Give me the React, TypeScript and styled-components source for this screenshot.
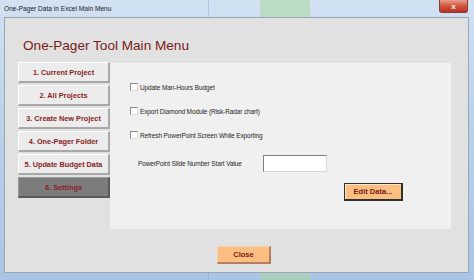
import React from "react";
import styled, { createGlobalStyle } from "styled-components";

const Global = createGlobalStyle`
  html, body { margin: 0; padding: 0; }
  body { width: 474px; height: 280px; overflow: hidden; font-family: "Liberation Sans", Arial, sans-serif; }
`;

const Window = styled.div`
  width: 474px;
  height: 280px;
  box-sizing: border-box;
  display: flex;
  flex-direction: column;
  background:
    linear-gradient(90deg, transparent 260px, rgba(170,215,160,0.55) 260px, rgba(170,215,160,0.55) 310px, transparent 310px),
    linear-gradient(90deg, transparent 208px, rgba(120,150,190,0.35) 208px, rgba(120,150,190,0.35) 209px, transparent 209px),
    linear-gradient(180deg, #d2e2f3 0%, #bcd2ec 40%, #a9c4e4 100%);
  padding: 0 5px 7px 4px;
`;

const TitleBar = styled.div`
  height: 17px;
  display: flex;
  align-items: flex-start;
  justify-content: space-between;
`;

const TitleText = styled.span`
  font-size: 6.6px;
  color: #1a1a1a;
  margin-top: 5px;
`;

const CloseX = styled.div`
  width: 27px;
  height: 12px;
  margin-right: 1px;
  border-radius: 0 0 3px 3px;
  background: linear-gradient(180deg, #e8a090 0%, #d45a42 45%, #b83220 100%);
  border: 1px solid #8a3a30;
  border-top: none;
  color: #fff;
  font-size: 8px;
  font-weight: bold;
  display: flex;
  align-items: center;
  justify-content: center;
`;

const Client = styled.div`
  flex: 1;
  background: #e1e1e1;
  border: 1px solid #9aa6b4;
  display: flex;
  flex-direction: column;
  padding: 19px 17px 0 13px;
`;

const Heading = styled.h1`
  margin: 0 0 7px 5px;
  font-weight: normal;
  font-size: 13.6px;
  line-height: 18px;
  color: #7a1a1c;
`;

const Body = styled.div`
  display: flex;
  align-items: flex-start;
`;

const NavColumn = styled.div`
  width: 92px;
  display: flex;
  flex-direction: column;
  gap: 2px;
`;

const NavButton = styled.div<{ $active?: boolean }>`
  height: 21px;
  box-sizing: border-box;
  display: flex;
  align-items: center;
  justify-content: center;
  font-size: 7.3px;
  font-weight: bold;
  color: #8a1c22;
  background: ${(p) => (p.$active ? "#7c7c7c" : "#ececec")};
  border-top: 1px solid ${(p) => (p.$active ? "#9a9a9a" : "#ffffff")};
  border-left: 1px solid ${(p) => (p.$active ? "#9a9a9a" : "#ffffff")};
  border-right: 2px solid ${(p) => (p.$active ? "#5a5a5a" : "#a8a8a8")};
  border-bottom: 2px solid ${(p) => (p.$active ? "#5a5a5a" : "#a8a8a8")};
`;

const Panel = styled.div`
  margin-top: 1px;
  width: 341px;
  height: 166px;
  background: #f0f0f0;
  box-sizing: border-box;
  display: flex;
  flex-direction: column;
  padding: 18px 0 0 20px;
`;

const CheckRow = styled.label`
  display: flex;
  align-items: center;
  gap: 2px;
  height: 12px;
  margin-bottom: 12px;
  font-size: 6.5px;
  letter-spacing: -0.12px;
  color: #262626;
`;

const Box = styled.span`
  width: 6px;
  height: 6px;
  background: #fff;
  border: 1px solid #8c8c8c;
  border-right-color: #dcdcdc;
  border-bottom-color: #dcdcdc;
`;

const FieldRow = styled.div`
  display: flex;
  align-items: center;
  margin-left: 8px;
  margin-top: 2px;
  font-size: 6.5px;
  letter-spacing: -0.12px;
  color: #262626;
`;

const FieldLabel = styled.span`
  width: 125px;
`;

const TextBox = styled.div`
  width: 64px;
  height: 17px;
  box-sizing: border-box;
  background: #fff;
  border: 1px solid #7f7f7f;
  border-right-color: #d8d8d8;
  border-bottom-color: #d8d8d8;
`;

const OrangeButton = styled.div<{ $focus?: boolean }>`
  box-sizing: border-box;
  display: flex;
  align-items: center;
  justify-content: center;
  font-size: 7.5px;
  font-weight: bold;
  color: #7a1a10;
  background: #fdbe82;
  border: 1px solid ${(p) => (p.$focus ? "#303030" : "#f0d0b0")};
  border-right: 2px solid ${(p) => (p.$focus ? "#303030" : "#b08060")};
  border-bottom: 2px solid ${(p) => (p.$focus ? "#303030" : "#b08060")};
  box-shadow: ${(p) => (p.$focus ? "inset 1px 1px 0 #ffe6cc" : "none")};
`;

const EditButton = styled(OrangeButton)`
  width: 59px;
  height: 18px;
  margin: 11px 0 0 214px;
`;

const CloseButton = styled(OrangeButton)`
  width: 54px;
  height: 18px;
  margin: 17px 0 0 199px;
`;

export default function App() {
  const nav = [
    "1. Current Project",
    "2. All Projects",
    "3. Create New Project",
    "4. One-Pager Folder",
    "5. Update Budget Data",
    "6. Settings",
  ];
  return (
    <>
      <Global />
      <Window>
        <TitleBar>
          <TitleText>One-Pager Data in Excel Main Menu</TitleText>
          <CloseX>x</CloseX>
        </TitleBar>
        <Client>
          <Heading>One-Pager Tool Main Menu</Heading>
          <Body>
            <NavColumn>
              {nav.map((n, i) => (
                <NavButton key={n} $active={i === 5}>
                  {n}
                </NavButton>
              ))}
            </NavColumn>
            <Panel>
              <CheckRow>
                <Box />
                Update Man-Hours Budget
              </CheckRow>
              <CheckRow>
                <Box />
                Export Diamond Module (Risk-Radar chart)
              </CheckRow>
              <CheckRow>
                <Box />
                Refresh PowerPoint Screen While Exporting
              </CheckRow>
              <FieldRow>
                <FieldLabel>PowerPoint Slide Number Start Value</FieldLabel>
                <TextBox />
              </FieldRow>
              <EditButton $focus>Edit Data...</EditButton>
            </Panel>
          </Body>
          <CloseButton>Close</CloseButton>
        </Client>
      </Window>
    </>
  );
}
